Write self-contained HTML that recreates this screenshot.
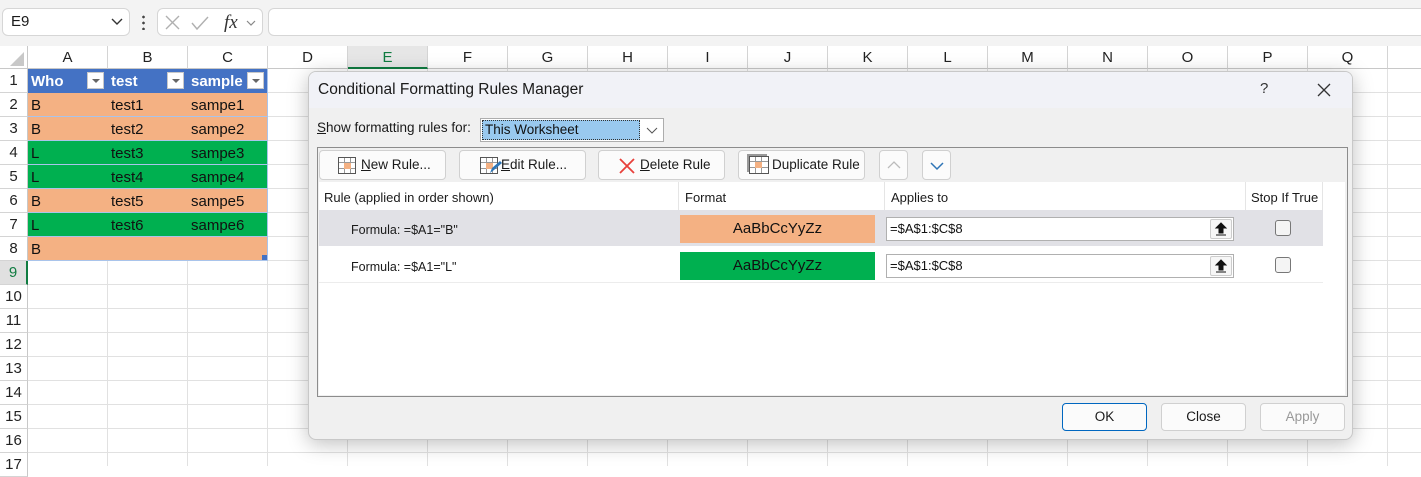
<!DOCTYPE html>
<html><head><meta charset="utf-8"><style>
*{box-sizing:border-box;margin:0;padding:0}
body{width:1421px;height:466px;overflow:hidden;background:#fff;font-family:"Liberation Sans",sans-serif;position:relative}
.a{position:absolute}
.top{left:0;top:0;width:1421px;height:46px;background:#f3f3f3}
.box{background:#fff;border:1px solid #d6d6d6;border-radius:6px}
.colh{top:46px;height:23px;width:80px;text-align:center;font-size:15px;line-height:23px;color:#222;border-right:1px solid #d4d4d4;border-bottom:1px solid #c8c8c8;background:#fff}
.rowh{left:0;width:28px;height:24px;text-align:center;font-size:15px;line-height:24px;color:#222;border-bottom:1px solid #d4d4d4;border-right:1px solid #c8c8c8;background:#fff}
.grid{left:28px;top:69px;width:1393px;height:397px;background-image:linear-gradient(to right,#e1e1e1 1px,transparent 1px),linear-gradient(to bottom,#e1e1e1 1px,transparent 1px);background-size:80px 24px;background-position:79px 0,0 23px}
.cell{height:24px;font-size:15px;line-height:25px;padding-left:3px;color:#111}
.or{background:#f4b183;border-bottom:1px solid #a9c4eb}
.gr{background:#00b050;border-bottom:1px solid #a9c4eb}
.hd{background:#4472c4;color:#fff;font-weight:bold}
.dd{width:17px;height:17px;background:#fff;border:1px solid #c8c8c8;top:3px}
.dd:after{content:"";position:absolute;left:4px;top:6px;border:4px solid transparent;border-top:4px solid #666}
.dlg{left:308px;top:71px;width:1045px;height:369px;background:#f0f0f0;border:1px solid #c8c8c8;border-radius:8px;box-shadow:0 4px 20px rgba(0,0,0,.25);overflow:hidden}
.t{font-size:14px;color:#1a1a1a}
.btn{background:#fbfbfb;border:1px solid #d0d0d0;border-radius:4px;height:30px;font-size:13.5px;line-height:28px;color:#1a1a1a}
.ic{width:18px;height:17px;border:1px solid #555;background:linear-gradient(#f4b183,#f4b183) 5px 5px/7px 6px no-repeat,linear-gradient(to right,transparent 5px,#999 5px,#999 6px,transparent 6px,transparent 11px,#999 11px,#999 12px,transparent 12px),linear-gradient(to bottom,transparent 4px,#999 4px,#999 5px,transparent 5px,transparent 10px,#999 10px,#999 11px,transparent 11px),#fff}
</style></head><body>
<div class="a top"></div>
<div class="a box" style="left:2px;top:8px;width:128px;height:28px"></div>
<div class="a t" style="left:11px;top:13px;font-size:15px">E9</div>
<svg class="a" style="left:110px;top:16px" width="14" height="10"><path d="M2 3l5 5 5-5" stroke="#333" stroke-width="1.4" fill="none"/></svg>
<div class="a" style="left:142px;top:14px;width:3px;height:16px;background:radial-gradient(circle,#444 1.2px,transparent 1.5px) 0 0/3px 6px"></div>
<div class="a box" style="left:157px;top:8px;width:106px;height:28px"></div>
<svg class="a" style="left:162px;top:12px" width="100" height="22"><path d="M4 4l13 13M17 4L4 17" stroke="#b0b0b0" stroke-width="1.4"/><path d="M30 11l5 6 11-12" stroke="#b0b0b0" stroke-width="1.4" fill="none"/><text x="62" y="16" font-family="Liberation Serif" font-style="italic" font-size="19" fill="#333">fx</text><path d="M85 9l4 4 4-4" stroke="#888" stroke-width="1.2" fill="none"/></svg>
<div class="a box" style="left:268px;top:8px;width:1160px;height:28px"></div>

<div class="a grid"></div>
<div class="a" style="left:0;top:46px;width:28px;height:23px;background:#fff;border-right:1px solid #c8c8c8;border-bottom:1px solid #c8c8c8"></div>
<svg class="a" style="left:8px;top:50px" width="18" height="18"><path d="M16 2V16H2Z" fill="#c8c8c8"/></svg>
<div class="a colh" style="left:28px">A</div><div class="a colh" style="left:108px">B</div><div class="a colh" style="left:188px">C</div><div class="a colh" style="left:268px">D</div><div class="a colh" style="left:348px;background:#e6e6e6;color:#107c41;border-bottom:2px solid #107c41">E</div><div class="a colh" style="left:428px">F</div><div class="a colh" style="left:508px">G</div><div class="a colh" style="left:588px">H</div><div class="a colh" style="left:668px">I</div><div class="a colh" style="left:748px">J</div><div class="a colh" style="left:828px">K</div><div class="a colh" style="left:908px">L</div><div class="a colh" style="left:988px">M</div><div class="a colh" style="left:1068px">N</div><div class="a colh" style="left:1148px">O</div><div class="a colh" style="left:1228px">P</div><div class="a colh" style="left:1308px">Q</div><div class="a colh" style="left:1388px"></div>

<div class="a rowh" style="top:69px">1</div><div class="a rowh" style="top:93px">2</div><div class="a rowh" style="top:117px">3</div><div class="a rowh" style="top:141px">4</div><div class="a rowh" style="top:165px">5</div><div class="a rowh" style="top:189px">6</div><div class="a rowh" style="top:213px">7</div><div class="a rowh" style="top:237px">8</div><div class="a rowh" style="top:261px;background:#e0e0e0;color:#107c41;border-right:2px solid #107c41">9</div><div class="a rowh" style="top:285px">10</div><div class="a rowh" style="top:309px">11</div><div class="a rowh" style="top:333px">12</div><div class="a rowh" style="top:357px">13</div><div class="a rowh" style="top:381px">14</div><div class="a rowh" style="top:405px">15</div><div class="a rowh" style="top:429px">16</div><div class="a rowh" style="top:453px">17</div>

<div class="a" style="left:28px;top:69px;width:240px">
<div class="cell hd" style="position:relative"><span class="a" style="left:3px">Who</span><span class="a" style="left:83px">test</span><span class="a" style="left:163px">sample</span><div class="a dd" style="left:59px"></div><div class="a dd" style="left:139px"></div><div class="a dd" style="left:219px"></div></div>
<div class="cell or" style="position:relative"><span class="a" style="left:3px">B</span><span class="a" style="left:83px">test1</span><span class="a" style="left:163px">sampe1</span></div>
<div class="cell or" style="position:relative"><span class="a" style="left:3px">B</span><span class="a" style="left:83px">test2</span><span class="a" style="left:163px">sampe2</span></div>
<div class="cell gr" style="position:relative"><span class="a" style="left:3px">L</span><span class="a" style="left:83px">test3</span><span class="a" style="left:163px">sampe3</span></div>
<div class="cell gr" style="position:relative"><span class="a" style="left:3px">L</span><span class="a" style="left:83px">test4</span><span class="a" style="left:163px">sampe4</span></div>
<div class="cell or" style="position:relative"><span class="a" style="left:3px">B</span><span class="a" style="left:83px">test5</span><span class="a" style="left:163px">sampe5</span></div>
<div class="cell gr" style="position:relative"><span class="a" style="left:3px">L</span><span class="a" style="left:83px">test6</span><span class="a" style="left:163px">sampe6</span></div>
<div class="cell or" style="position:relative"><span class="a" style="left:3px">B</span><div class="a" style="left:234px;top:18px;width:5px;height:5px;background:#4472c4"></div></div>
</div>
<div class="a" style="left:267px;top:69px;width:1px;height:192px;background:#a9c4eb"></div>

<div class="a dlg">
<div class="a" style="left:0;top:0;width:1045px;height:36px;background:#f1f2f7"></div>
<div class="a" style="left:9px;top:9px;font-size:15.5px;color:#1a1a1a">Conditional Formatting Rules Manager</div>
<div class="a" style="left:951px;top:8px;font-size:15px;color:#333">?</div>
<svg class="a" style="left:1008px;top:11px" width="14" height="14"><path d="M1 1l12 12M13 1L1 13" stroke="#333" stroke-width="1.3"/></svg>
<div class="a t" style="left:8px;top:48px;font-size:13.5px"><u>S</u>how formatting rules for:</div>
<div class="a" style="left:171px;top:46px;width:184px;height:24px;background:#fff;border:1px solid #adadad"></div>
<div class="a" style="left:173px;top:48px;width:158px;height:20px;background:#99c9ef;border:1px dotted #333;font-size:13.5px;line-height:18px;padding-left:2px;color:#111">This Worksheet</div>
<svg class="a" style="left:337px;top:53px" width="12" height="10"><path d="M1 3l5 5 5-5" stroke="#555" fill="none"/></svg>
<div class="a" style="left:8px;top:75px;width:1031px;height:250px;border:1px solid #8c8c8c;background:#f0f0f0"></div>
<div class="a btn" style="left:10px;top:78px;width:127px"><div class="a ic" style="left:18px;top:6px"></div><span class="a" style="left:41px"><u>N</u>ew Rule...</span></div>
<div class="a btn" style="left:150px;top:78px;width:127px"><div class="a ic" style="left:20px;top:6px"></div><svg class="a" style="left:28px;top:8px" width="14" height="16"><path d="M2 14l2-5 8-7 2 2-8 7z" fill="#2e75b6"/></svg><span class="a" style="left:41px"><u>E</u>dit Rule...</span></div>
<div class="a btn" style="left:289px;top:78px;width:127px"><svg class="a" style="left:19px;top:6px" width="18" height="18"><path d="M2 2l14 14M16 2L2 16" stroke="#e8403b" stroke-width="1.8"/></svg><span class="a" style="left:41px"><u>D</u>elete Rule</span></div>
<div class="a btn" style="left:429px;top:78px;width:127px"><div class="a ic" style="left:10px;top:5px;width:20px;height:18px;box-shadow:-2px -2px 0 #999"></div><span class="a" style="left:33px">Duplicate Rule</span></div>
<div class="a btn" style="left:570px;top:78px;width:29px"><svg class="a" style="left:7px;top:9px" width="14" height="10"><path d="M1 8l6-6 6 6" stroke="#bbb" fill="none" stroke-width="1.3"/></svg></div>
<div class="a btn" style="left:613px;top:78px;width:29px"><svg class="a" style="left:7px;top:10px" width="14" height="10"><path d="M1 2l6 6 6-6" stroke="#2e75b6" fill="none" stroke-width="1.5"/></svg></div>
<div class="a" style="left:10px;top:110px;width:1026px;height:213px;background:#fff"></div>
<div class="a" style="left:369px;top:110px;width:1px;height:28px;background:#e5e5e5"></div>
<div class="a" style="left:575px;top:110px;width:1px;height:28px;background:#e5e5e5"></div>
<div class="a" style="left:936px;top:110px;width:1px;height:28px;background:#e5e5e5"></div>
<div class="a" style="left:1013px;top:110px;width:1px;height:28px;background:#e5e5e5"></div>
<div class="a t" style="left:15px;top:118px;font-size:13px">Rule (applied in order shown)</div>
<div class="a t" style="left:376px;top:118px;font-size:13px">Format</div>
<div class="a t" style="left:582px;top:118px;font-size:13px">Applies to</div>
<div class="a t" style="left:942px;top:118px;font-size:13px">Stop If True</div>
<div class="a" style="left:10px;top:138px;width:1004px;height:36px;background:#e1e1e6"></div>
<div class="a" style="left:10px;top:210px;width:1004px;height:1px;background:#ececec"></div>
<div class="a t" style="left:42px;top:151px;font-size:12.5px">Formula: =$A1="B"</div>
<div class="a t" style="left:42px;top:188px;font-size:12.5px">Formula: =$A1="L"</div>
<div class="a" style="left:371px;top:143px;width:195px;height:28px;background:#f4b183;text-align:center;font-size:15px;line-height:28px;color:#111">AaBbCcYyZz</div>
<div class="a" style="left:371px;top:180px;width:195px;height:28px;background:#00b050;text-align:center;font-size:15px;line-height:28px;color:#111">AaBbCcYyZz</div>
<div class="a" style="left:577px;top:145px;width:348px;height:24px;background:#fff;border:1px solid #b0b0b0;font-size:13px;line-height:22px;padding-left:3px;color:#111">=$A$1:$C$8</div>
<div class="a" style="left:577px;top:182px;width:348px;height:24px;background:#fff;border:1px solid #b0b0b0;font-size:13px;line-height:22px;padding-left:3px;color:#111">=$A$1:$C$8</div>
<div class="a" style="left:901px;top:147px;width:22px;height:20px;background:#f6f6f6;border:1px solid #ccc;border-radius:2px"></div>
<div class="a" style="left:901px;top:184px;width:22px;height:20px;background:#f6f6f6;border:1px solid #ccc;border-radius:2px"></div>
<svg class="a" style="left:905px;top:149px" width="14" height="16"><path d="M7 2L2 7h3v5h4V7h3z M2 14h10" fill="#111" stroke="#111" stroke-width="1"/></svg>
<svg class="a" style="left:905px;top:186px" width="14" height="16"><path d="M7 2L2 7h3v5h4V7h3z M2 14h10" fill="#111" stroke="#111" stroke-width="1"/></svg>
<div class="a" style="left:966px;top:148px;width:16px;height:16px;background:#f4f4f4;border:1px solid #777;border-radius:3px"></div>
<div class="a" style="left:966px;top:185px;width:16px;height:16px;background:#f4f4f4;border:1px solid #777;border-radius:3px"></div>
<div class="a btn" style="left:753px;top:331px;width:85px;height:28px;border:1px solid #0067c0;text-align:center;line-height:26px">OK</div>
<div class="a btn" style="left:852px;top:331px;width:85px;height:28px;text-align:center;line-height:26px">Close</div>
<div class="a btn" style="left:951px;top:331px;width:85px;height:28px;text-align:center;line-height:26px;color:#999">Apply</div>
</div>
</body></html>
